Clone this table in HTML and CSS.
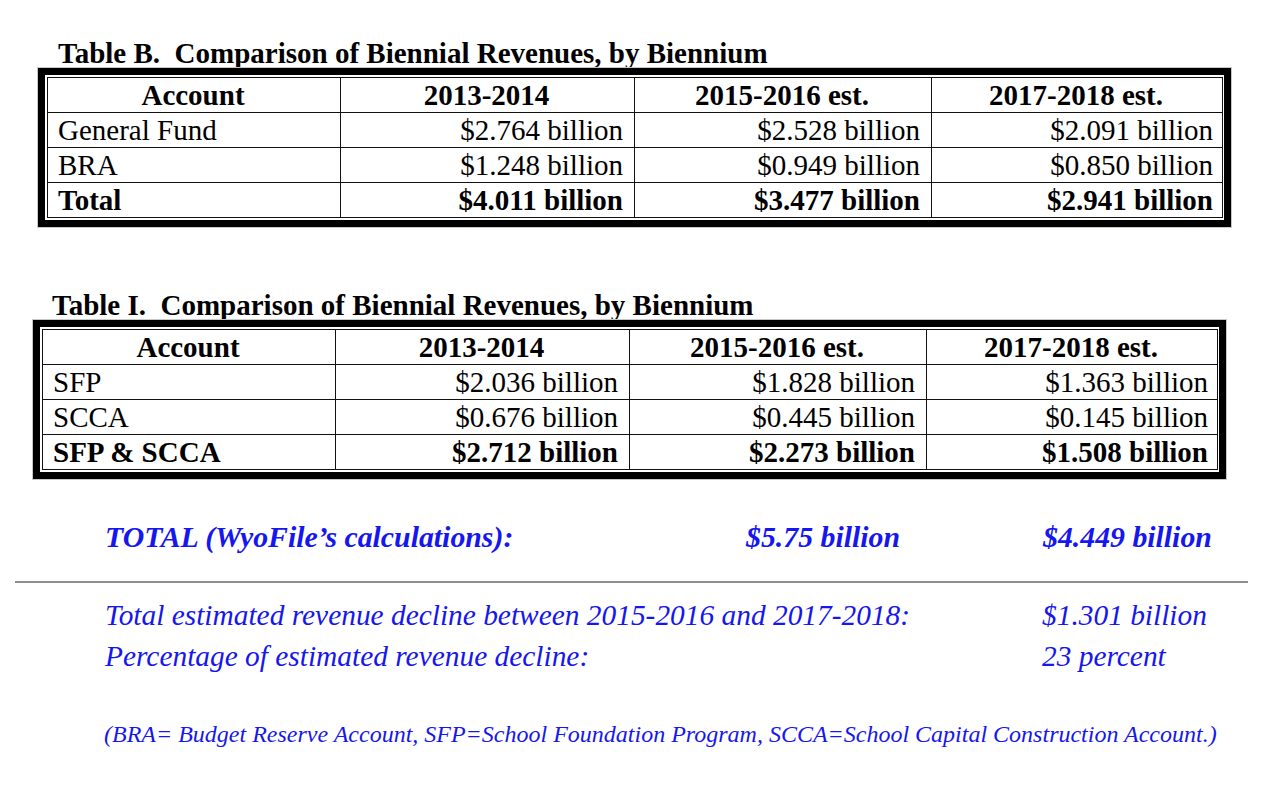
FILE: index.html
```html
<!DOCTYPE html>
<html lang="en">
<head>
<meta charset="utf-8">
<title>Comparison of Biennial Revenues</title>
<link rel="stylesheet" href="styles.css">
</head>
<body>
<div class="page">
  <section class="block block-b">
    <h2 class="table-title">Table B.&nbsp; Comparison of Biennial Revenues, by Biennium</h2>
    <div class="frame">
      <table class="rev">
        <colgroup><col class="c1"><col class="c2"><col class="c3"><col class="c4"></colgroup>
        <thead>
          <tr><th>Account</th><th>2013-2014</th><th>2015-2016 est.</th><th>2017-2018 est.</th></tr>
        </thead>
        <tbody>
          <tr><td class="acct">General Fund</td><td>$2.764 billion</td><td>$2.528 billion</td><td>$2.091 billion</td></tr>
          <tr><td class="acct">BRA</td><td>$1.248 billion</td><td>$0.949 billion</td><td>$0.850 billion</td></tr>
          <tr class="total"><td class="acct">Total</td><td>$4.011 billion</td><td>$3.477 billion</td><td>$2.941 billion</td></tr>
        </tbody>
      </table>
    </div>
  </section>

  <section class="block block-i">
    <h2 class="table-title">Table I.&nbsp; Comparison of Biennial Revenues, by Biennium</h2>
    <div class="frame">
      <table class="rev">
        <colgroup><col class="c1"><col class="c2"><col class="c3"><col class="c4"></colgroup>
        <thead>
          <tr><th>Account</th><th>2013-2014</th><th>2015-2016 est.</th><th>2017-2018 est.</th></tr>
        </thead>
        <tbody>
          <tr><td class="acct">SFP</td><td>$2.036 billion</td><td>$1.828 billion</td><td>$1.363 billion</td></tr>
          <tr><td class="acct">SCCA</td><td>$0.676 billion</td><td>$0.445 billion</td><td>$0.145 billion</td></tr>
          <tr class="total"><td class="acct">SFP &amp; SCCA</td><td>$2.712 billion</td><td>$2.273 billion</td><td>$1.508 billion</td></tr>
        </tbody>
      </table>
    </div>
  </section>

  <div class="grand">
    <span>TOTAL (WyoFile’s calculations):</span>
    <span>$5.75 billion</span>
    <span>$4.449 billion</span>
  </div>

  <hr class="rule">

  <div class="decline">
    <span>Total estimated revenue decline between 2015-2016 and 2017-2018:</span>
    <span>$1.301 billion</span>
    <span>Percentage of estimated revenue decline:</span>
    <span>23 percent</span>
  </div>

  <p class="note">(BRA= Budget Reserve Account, SFP=School Foundation Program, SCCA=School Capital Construction Account.)</p>
</div>
</body>
</html>
```

FILE: styles.css
```css
html, body {
  margin: 0;
  padding: 0;
  background: #ffffff;
}

body {
  font-family: "Liberation Serif", "Times New Roman", serif;
  color: #000;
}

.page {
  width: 1272px;
  padding-top: 38px;
}

.block {
  display: flex;
  flex-direction: column;
}

.block-b { margin-left: 38px; width: 1193px; }
.block-i { margin-left: 33px; width: 1193px; margin-top: 63px; }

.table-title {
  margin: 0;
  font-size: 29px;
  font-weight: bold;
  line-height: 30px;
  height: 30px;
  white-space: nowrap;
}
.block-b .table-title { padding-left: 20px; }
.block-i .table-title { padding-left: 19px; }

.frame {
  border: 7px solid #000;
  padding: 2px;
  box-shadow: 0 0 0 1px #c8c8c8;
}

.rev {
  width: 100%;
  table-layout: fixed;
  border-collapse: collapse;
  font-size: 29px;
}

.rev col.c1 { width: 293px; }
.rev col.c2 { width: 294px; }
.rev col.c3 { width: 297px; }
.rev col.c4 { width: 291px; }

.rev th, .rev td {
  border: 1px solid #111;
  height: 34px;
  padding: 0 11px 0 9px;
  line-height: 34px;
  white-space: nowrap;
  box-sizing: border-box;
}

.rev th {
  font-weight: bold;
  text-align: center;
}

.rev td {
  text-align: right;
  font-weight: normal;
}

.rev td:last-child {
  padding-right: 9px;
}

.rev td.acct {
  text-align: left;
  padding-left: 10px;
}

.rev tr.total td {
  font-weight: bold;
}

.grand {
  margin-top: 40px;
  padding-left: 105px;
  display: grid;
  grid-template-columns: 641px 297px auto;
  font-size: 29.8px;
  font-weight: bold;
  font-style: italic;
  line-height: 36px;
  color: #1616ee;
  white-space: nowrap;
}

.rule {
  margin: 26px 0 0 15px;
  width: 1233px;
  height: 2px;
  border: 0;
  background: #8e8e8e;
}

.decline {
  margin-top: 12px;
  padding-left: 105px;
  display: grid;
  grid-template-columns: 937px auto;
  font-size: 29.4px;
  font-style: italic;
  line-height: 41px;
  color: #1616ee;
  white-space: nowrap;
}

.note {
  margin: 42px 0 0 104px;
  font-size: 24px;
  font-style: italic;
  line-height: 30px;
  color: #1616ee;
  white-space: nowrap;
}
```
